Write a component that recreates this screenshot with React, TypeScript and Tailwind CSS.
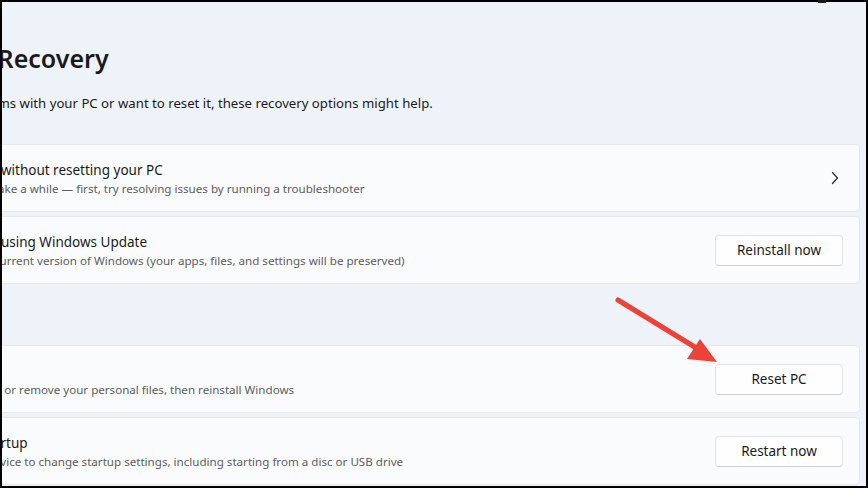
import { ChevronRight } from "lucide-react";

// Settings > System > Recovery, cropped on the left like the screenshot.

const FONT = { fontFamily: '"Segoe UI", "Noto Sans", "Open Sans", Arial, sans-serif' };

type Row = {
  title: string;
  desc: string;
  action?: string;
};

const TOP_ROWS: Row[] = [
  {
    title: "Fix problems without resetting your PC",
    desc: "Resetting can take a while — first, try resolving issues by running a troubleshooter",
  },
  {
    title: "Fix problems using Windows Update",
    desc: "Reinstall your current version of Windows (your apps, files, and settings will be preserved)",
    action: "Reinstall now",
  },
];

const OPTION_ROWS: Row[] = [
  {
    title: "Reset this PC",
    desc: "Choose to keep or remove your personal files, then reinstall Windows",
    action: "Reset PC",
  },
  {
    title: "Advanced startup",
    desc: "Restart your device to change startup settings, including starting from a disc or USB drive",
    action: "Restart now",
  },
];

function SettingCard({ row }: { row: Row }) {
  return (
    <div className="h-[68px] flex items-center rounded-[4px] border border-[#e6e8ec] bg-[#fafbfd] pl-[48px] pr-4">
      <div className="flex-1 flex flex-col whitespace-nowrap">
        <span className="pt-[2px] text-[13.5px] leading-[19px] text-[#1b1b1b]">{row.title}</span>
        <span className="ml-[1px] text-[11.6px] leading-[17px] text-[#5d5d5d]">{row.desc}</span>
      </div>
      {row.action ? (
        <button className="w-[128px] h-[31px] rounded-[4px] border border-[#e3e3e3] border-b-[#d0d0d0] bg-[#fefefe] text-[13.5px] text-[#1b1b1b]">
          {row.action}
        </button>
      ) : (
        <svg width="8" height="14" viewBox="0 0 8 14" className="mr-[4px]">
          <path d="M1.5 1.5 L6.5 7 L1.5 12.5" fill="none" stroke="#333" strokeWidth="1.3" strokeLinecap="round" strokeLinejoin="round" />
        </svg>
      )}
    </div>
  );
}

export default function App() {
  return (
    <div className="w-[868px] h-[488px] bg-black p-[2px] relative overflow-hidden" style={FONT}>
      <div className="w-full h-full bg-[#eef2f9] overflow-hidden relative">
        <div className="ml-[-135px] mr-[6px] flex flex-col">
          {/* Header */}
          <div className="mt-[37px] h-[40px] flex items-center gap-[11px] text-[25px] font-semibold text-[#1b1b1b] whitespace-nowrap">
            <span className="text-[#5d5d5d]">System</span>
            <ChevronRight size={20} strokeWidth={2} className="text-[#5d5d5d]" />
            <span>Recovery</span>
          </div>
          <p className="mt-[14px] ml-[-9px] h-[20px] text-[13.2px] leading-[20px] text-[#1b1b1b] whitespace-nowrap">
            If you're having problems with your PC or want to reset it, these recovery options might help.
          </p>

          <div className="mt-[31px] flex flex-col gap-1">
            {TOP_ROWS.map((r) => (
              <SettingCard key={r.title} row={r} />
            ))}
          </div>

          <div className="h-[61px] flex items-end pb-[10px]">
            <span className="text-[14px] font-semibold text-[#1b1b1b]">Recovery options</span>
          </div>

          <div className="flex flex-col gap-1">
            {OPTION_ROWS.map((r) => (
              <SettingCard key={r.title} row={r} />
            ))}
          </div>
        </div>

        {/* Annotation arrow */}
        <svg className="absolute left-0 top-0" width="864" height="484" viewBox="2 2 864 484">
          <line x1="618" y1="300" x2="698" y2="349" stroke="#ef4136" strokeWidth="5" strokeLinecap="round" />
          <polygon points="717,362 687,359 700,339" fill="#ef4136" />
        </svg>
      </div>
      <div className="absolute left-[818px] top-0 w-[8px] h-[3px] bg-[#1a1a1a]" />
    </div>
  );
}
